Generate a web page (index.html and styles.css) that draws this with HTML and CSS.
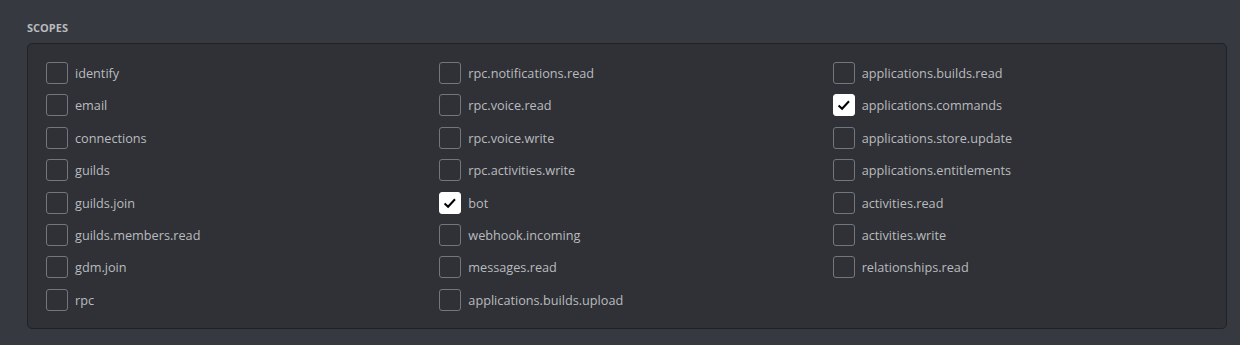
FILE: index.html
```html
<!DOCTYPE html>
<html lang="en">

<head>
  <meta charset="UTF-8">
  <meta name="viewport" content="width=device-width, initial-scale=1.0">
  <title>Scopes</title>
  <link rel="stylesheet" href="styles.css">
</head>

<body>
  <div class="page">
    <h5 class="title">Scopes</h5>
    <div class="scopes">
      <label class="scope"><span class="box"></span>identify</label>
      <label class="scope"><span class="box"></span>rpc.notifications.read</label>
      <label class="scope"><span class="box"></span>applications.builds.read</label>

      <label class="scope"><span class="box"></span>email</label>
      <label class="scope"><span class="box"></span>rpc.voice.read</label>
      <label class="scope"><span class="box checked"><svg viewBox="0 0 24 24" width="20" height="20"><path d="M5.5 12.5l4.2 4 8.3-9" fill="none" stroke="#000" stroke-width="2.4"/></svg></span>applications.commands</label>

      <label class="scope"><span class="box"></span>connections</label>
      <label class="scope"><span class="box"></span>rpc.voice.write</label>
      <label class="scope"><span class="box"></span>applications.store.update</label>

      <label class="scope"><span class="box"></span>guilds</label>
      <label class="scope"><span class="box"></span>rpc.activities.write</label>
      <label class="scope"><span class="box"></span>applications.entitlements</label>

      <label class="scope"><span class="box"></span>guilds.join</label>
      <label class="scope"><span class="box checked"><svg viewBox="0 0 24 24" width="20" height="20"><path d="M5.5 12.5l4.2 4 8.3-9" fill="none" stroke="#000" stroke-width="2.4"/></svg></span>bot</label>
      <label class="scope"><span class="box"></span>activities.read</label>

      <label class="scope"><span class="box"></span>guilds.members.read</label>
      <label class="scope"><span class="box"></span>webhook.incoming</label>
      <label class="scope"><span class="box"></span>activities.write</label>

      <label class="scope"><span class="box"></span>gdm.join</label>
      <label class="scope"><span class="box"></span>messages.read</label>
      <label class="scope"><span class="box"></span>relationships.read</label>

      <label class="scope"><span class="box"></span>rpc</label>
      <label class="scope"><span class="box"></span>applications.builds.upload</label>
    </div>
  </div>
</body>

</html>
```

FILE: styles.css
```css
* {
  padding: 0;
  margin: 0;
  box-sizing: border-box;
}

body {
  background-color: #36393f;
  font-family: "Open Sans", "Noto Sans", sans-serif;
}

.page {
  padding: 20px 0 0 27px;
}

.title {
  font-size: 11px;
  line-height: 16px;
  font-weight: 700;
  text-transform: uppercase;
  color: #b9bbbe;
  margin-bottom: 7px;
}

.scopes {
  width: 1200px;
  background-color: #2f3136;
  border: 1px solid #202225;
  border-radius: 5px;
  padding: 18px 0 17px 18px;
  display: grid;
  grid-template-columns: repeat(3, 1fr);
  row-gap: 10.4px;
}

.scope {
  display: flex;
  align-items: center;
  height: 22px;
  font-size: 12.7px;
  color: #b9bbbe;
}

.box {
  width: 22px;
  height: 22px;
  border: 1px solid #72767d;
  border-radius: 3px;
  margin-right: 7px;
  display: flex;
  align-items: center;
  justify-content: center;
}

.box.checked {
  background-color: #fff;
  border-color: #fff;
}
```
